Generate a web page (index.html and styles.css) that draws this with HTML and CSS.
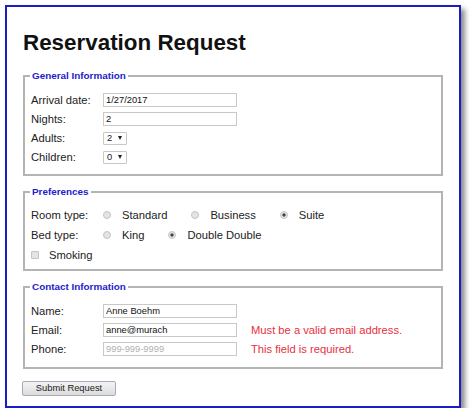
FILE: index.html
```html
<!DOCTYPE html>
<html lang="en">
<head>
    <meta charset="UTF-8">
    <meta name="viewport" content="width=device-width, initial-scale=1.0">
    <title>Reservation Request</title>
    <link rel="stylesheet" href="styles.css">
</head>

<body>
    <div class="frame">
        <h1>Reservation Request</h1>
        <form id="reservation">
            <fieldset>
                <legend>General Information</legend>
                <div class="row">
                    <label for="arrival">Arrival date:</label>
                    <input type="text" id="arrival" value="1/27/2017">
                </div>
                <div class="row">
                    <label for="nights">Nights:</label>
                    <input type="text" id="nights" value="2">
                </div>
                <div class="row">
                    <label for="adults">Adults:</label>
                    <span class="select"><select id="adults"><option>1</option><option selected>2</option><option>3</option><option>4</option></select></span>
                </div>
                <div class="row">
                    <label for="children">Children:</label>
                    <span class="select"><select id="children"><option selected>0</option><option>1</option><option>2</option><option>3</option></select></span>
                </div>
            </fieldset>

            <fieldset class="prefs">
                <legend>Preferences</legend>
                <div class="row">
                    <label>Room type:</label>
                    <input type="radio" name="room" id="standard">
                    <label for="standard" class="opt">Standard</label>
                    <input type="radio" name="room" id="business">
                    <label for="business" class="opt">Business</label>
                    <input type="radio" name="room" id="suite" checked>
                    <label for="suite" class="opt">Suite</label>
                </div>
                <div class="row">
                    <label>Bed type:</label>
                    <input type="radio" name="bed" id="king">
                    <label for="king" class="opt">King</label>
                    <input type="radio" name="bed" id="double" checked>
                    <label for="double" class="opt">Double Double</label>
                </div>
                <div class="row">
                    <input type="checkbox" id="smoking">
                    <label for="smoking" class="opt">Smoking</label>
                </div>
            </fieldset>

            <fieldset class="contact">
                <legend>Contact Information</legend>
                <div class="row">
                    <label for="name">Name:</label>
                    <input type="text" id="name" value="Anne Boehm">
                </div>
                <div class="row">
                    <label for="email">Email:</label>
                    <input type="text" id="email" value="anne@murach">
                    <span class="error">Must be a valid email address.</span>
                </div>
                <div class="row">
                    <label for="phone">Phone:</label>
                    <input type="text" id="phone" placeholder="999-999-9999">
                    <span class="error">This field is required.</span>
                </div>
            </fieldset>

            <button type="button" id="submitBtn">Submit Request</button>
        </form>
    </div>
</body>
</html>
```

FILE: styles.css
```css
* {
    font-family: 'Liberation Sans', Arial, sans-serif;
    box-sizing: border-box;
}
body {
    margin: 0;
    background-color: #fff;
}
.frame {
    width: 456px;
    margin: 5px 0 0 5px;
    padding: 0 15px 10px 16px;
    border: 2px solid #1c1cc4;
    background-color: #fff;
    box-shadow: 4px 4px 5px rgba(0, 0, 0, 0.45);
}
h1 {
    font-size: 22.4px;
    line-height: 26px;
    font-weight: bold;
    color: #111;
    margin: 23px 0 14px 0;
}
fieldset {
    width: 420px;
    margin: 0 0 10px 0;
    padding: 8px 6px 8px 6px;
    border: 2px solid #b4b4b4;
}
fieldset.prefs {
    padding-top: 7px;
    padding-bottom: 4px;
}
fieldset.contact {
    padding-bottom: 9px;
    margin-bottom: 8px;
}
legend {
    color: #2222cc;
    font-size: 9.9px;
    line-height: 12px;
    font-weight: bold;
    padding: 0 2px;
    margin-left: -1px;
}
.row {
    display: flex;
    align-items: center;
    height: 19px;
    font-size: 11.2px;
    color: #222;
}
.prefs .row {
    height: 20px;
}
.row > label:first-child {
    width: 72px;
    flex: none;
}
input[type="text"] {
    width: 134px;
    height: 14px;
    border: 1px solid #c8c8c8;
    padding: 0 2px;
    font-size: 9.33px;
    color: #111;
    outline: none;
}
input::placeholder {
    color: #b0b0b0;
}
.select {
    position: relative;
    display: inline-block;
}
select {
    -webkit-appearance: none;
    appearance: none;
    width: 24px;
    height: 13px;
    border: 1px solid #c8c8c8;
    border-radius: 1px;
    padding: 0 0 0 3px;
    font-size: 9.33px;
    line-height: 11px;
    color: #222;
    background-color: #fff;
}
.select::after {
    content: "";
    position: absolute;
    right: 5px;
    top: 5px;
    border-left: 2px solid transparent;
    border-right: 2px solid transparent;
    border-top: 4px solid #222;
    pointer-events: none;
}
input[type="radio"], input[type="checkbox"] {
    -webkit-appearance: none;
    appearance: none;
    width: 8px;
    height: 8px;
    margin: 0 11px 0 0;
    border: 1px solid #c4c4c4;
    background-color: #e4e4e4;
    flex: none;
}
input[type="radio"] {
    border-radius: 50%;
}
input[type="radio"]:checked {
    background: radial-gradient(circle, #444 0 1.4px, #e4e4e4 1.8px);
}
input[type="checkbox"] {
    border-radius: 1px;
    margin-right: 10px;
}
.opt {
    margin-right: 24px;
}
.error {
    color: #e8303e;
    margin-left: 14px;
}
#submitBtn {
    width: 94px;
    height: 15px;
    margin-left: -1px;
    padding: 0;
    font-size: 9.33px;
    color: #222;
    border: 1px solid #a4acbc;
    border-radius: 2px;
    background: linear-gradient(#f4f4f4, #dcdcdc);
    cursor: pointer;
}
```
